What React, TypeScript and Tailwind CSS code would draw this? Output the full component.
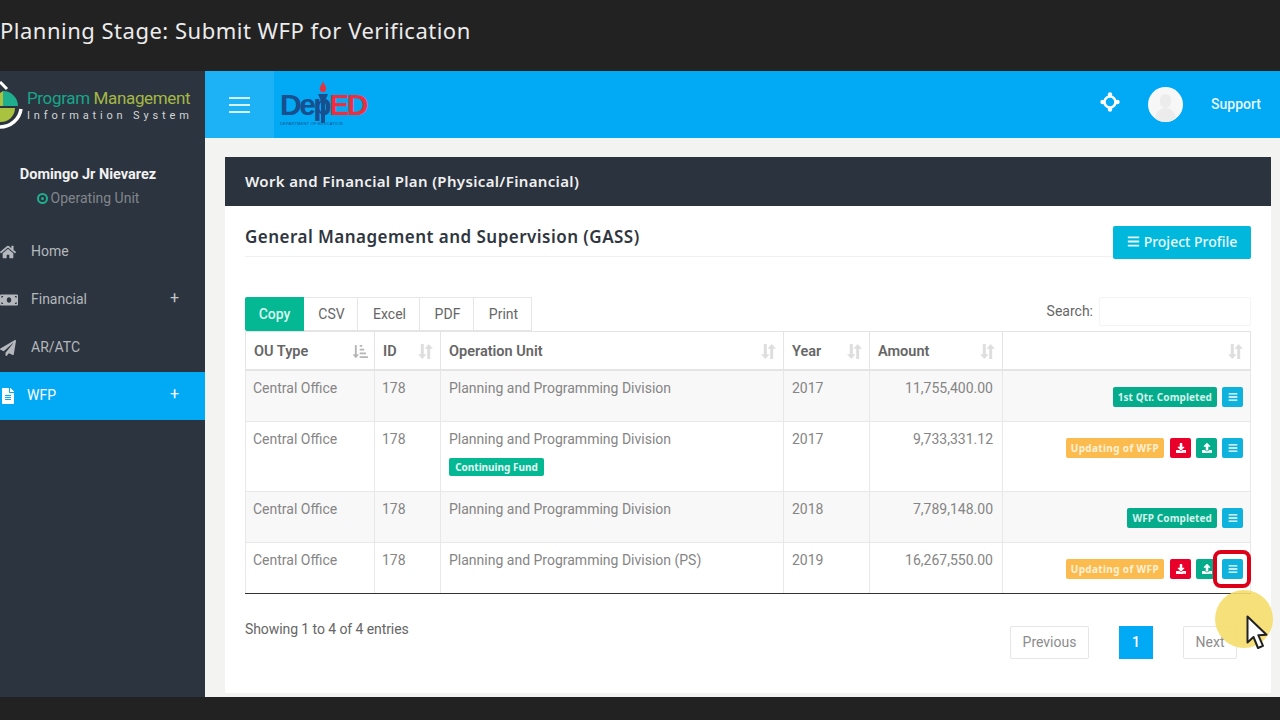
import { FaBars, FaDownload, FaFileAlt, FaHome, FaMoneyBill, FaPaperPlane, FaSortAmountDownAlt, FaUpload } from 'react-icons/fa';

const rows = [
  { unit: 'Planning and Programming Division', year: '2017', amount: '11,755,400.00', h: 'h-[51px]', status: '1st Qtr. Completed', done: true },
  { unit: 'Planning and Programming Division', year: '2017', amount: '9,733,331.12', h: 'h-[70px]', status: 'Updating of WFP', done: false, fund: true },
  { unit: 'Planning and Programming Division', year: '2018', amount: '7,789,148.00', h: 'h-[51px]', status: 'WFP Completed', done: true },
  { unit: 'Planning and Programming Division (PS)', year: '2019', amount: '16,267,550.00', h: 'h-[50px]', status: 'Updating of WFP', done: false },
];

const columns = [
  { label: 'OU Type', w: 'w-[129px]', active: true },
  { label: 'ID', w: 'w-[66px]' },
  { label: 'Operation Unit', w: 'w-[343px]' },
  { label: 'Year', w: 'w-[86px]' },
  { label: 'Amount', w: 'w-[133px]' },
  { label: '', w: 'flex-1' },
];

function SortIcon() {
  return (
    <svg width="17" height="17" viewBox="0 0 16 16" fill="#dedede" className="ml-auto">
      <path d="M3.6 1h2.8v9.5H9L5 15 1 10.5h2.6z" />
      <path d="M9.6 15h2.8V5.5H15L11 1 7 5.5h2.6z" />
    </svg>
  );
}

function ActionButton({ color, children }: { color: string; children: React.ReactNode }) {
  return <span className={`flex h-5 w-[21px] items-center justify-center rounded-[2px] text-[10px] text-white ${color}`}>{children}</span>;
}

function SideItem({ icon, label, plus, active }: { icon: React.ReactNode; label: string; plus?: boolean; active?: boolean }) {
  return (
    <div className={`flex h-12 items-center pr-[26px] text-[14px] ${active ? 'bg-[#02a9f4] text-white' : 'text-[#b4b8bc]'}`}>
      <span className="flex w-[31px] shrink-0 text-[16px]">{icon}</span>
      <span className={active ? '-ml-1 flex-1' : 'flex-1'}>{label}</span>
      {plus && <span className={`mb-1 text-[16px] ${active ? 'text-white' : 'text-[#c4c7ca]'}`}>+</span>}
    </div>
  );
}

export default function App() {
  return (
    <div className="relative flex h-[720px] w-[1280px] flex-col overflow-hidden bg-[#222222] font-['Roboto',sans-serif]">
      <div className="flex h-[71px] items-center pb-[10px] font-['Noto_Sans',sans-serif] text-[22px] tracking-[0.5px] text-[#ececec]">
        <span>Planning Stage: Submit WFP for Verification</span>
      </div>

      <div className="flex h-[626px]">
        {/* Sidebar */}
        <aside className="w-[205px] shrink-0 bg-[#2c343f]">
          <div className="flex h-[67px] items-center">
            <svg width="24" height="50" viewBox="0 0 24 50" className="mt-[2px] shrink-0">
              <path d="M3 10a15 15 0 0 1 15 15H3z" fill="#1fae8e" />
              <path d="M0 12l3-2v15H0z" fill="#a9c23f" />
              <path d="M0 27h15a14 14 0 0 1-15 14z" fill="#a9c23f" />
              <path d="M21 28a21 21 0 0 1-21 18" fill="none" stroke="#fff" strokeWidth="3.5" />
              <path d="M0 1l7 7" stroke="#fff" strokeWidth="3" />
            </svg>
            <div className="ml-[3px] leading-none">
              <div className="mt-[2px] text-[17px] tracking-[-0.35px]">
                <span className="text-[#17a689]">Program </span>
                <span className="text-[#a4b845]">Management</span>
              </div>
              <div className="mt-[3px] text-[11px] tracking-[3.85px] text-[#d2d4d6]">Information System</div>
            </div>
          </div>
          <div className="mt-[26px] pr-[29px] text-center">
            <div className="whitespace-nowrap text-[14.5px] font-bold text-[#f1f1f1]">Domingo Jr Nievarez</div>
            <div className="mt-[2px] flex items-center justify-center gap-[3px] text-[14px] text-[#81868c]">
              <span className="flex h-[11px] w-[11px] items-center justify-center rounded-full border-2 border-[#1fae8e]">
                <span className="h-[3px] w-[3px] rounded-full bg-[#1fae8e]" />
              </span>
              Operating Unit
            </div>
          </div>
          <nav className="mt-[19px]">
            <SideItem icon={<FaHome />} label="Home" />
            <SideItem icon={<FaMoneyBill className="text-[18px]" />} label="Financial" plus />
            <SideItem icon={<FaPaperPlane />} label="AR/ATC" />
            <SideItem icon={<FaFileAlt className="text-white" />} label="WFP" plus active />
          </nav>
        </aside>

        <div className="flex flex-1 flex-col bg-[#f3f3f1]">
          {/* Top bar */}
          <header className="flex h-[67px] shrink-0 items-center bg-[#02a9f4] pr-[19px]">
            <div className="flex h-full w-[69px] items-center justify-center bg-[#1db1f5]">
              <span className="flex w-[21px] flex-col gap-[5px]">
                <span className="h-[2px] bg-[#d8f2fd]" />
                <span className="h-[2px] bg-[#d8f2fd]" />
                <span className="h-[2px] bg-[#d8f2fd]" />
              </span>
            </div>
            <div className="relative ml-[6px] flex h-[50px] w-[90px] items-center font-['Liberation_Sans',sans-serif] text-[30px] font-bold leading-none tracking-[-2.5px]">
              <span className="text-[#174f8f]">Dep</span>
              <span className="text-[#ee2e3c]">ED</span>
              <svg width="12" height="44" viewBox="0 0 12 44" className="absolute left-[37px] top-0">
                <path d="M6 1c1 4 4 5 3 9-1 3-5 3-6 0C2 7 5 5 6 1z" fill="#e5343f" />
                <path d="M1 14h10l-3 7v22H4V21z" fill="#174f8f" />
              </svg>
              <span className="absolute left-0 top-[42px] whitespace-nowrap text-[4px] font-normal leading-none tracking-[0.2px] text-[#174f8f]">DEPARTMENT OF EDUCATION</span>
            </div>
            <div className="flex-1" />
            <svg width="20" height="20" viewBox="0 0 20 20" className="mb-[5px] mr-[28px]">
              <circle cx="10" cy="10" r="5.5" fill="none" stroke="#fff" strokeWidth="2.6" />
              <circle cx="10" cy="2.5" r="2.2" fill="#fff" />
              <circle cx="10" cy="17.5" r="2.2" fill="#fff" />
              <circle cx="2.5" cy="10" r="2.2" fill="#fff" />
              <circle cx="17.5" cy="10" r="2.2" fill="#fff" />
            </svg>
            <div className="relative mr-[28px] h-[35px] w-[35px] overflow-hidden rounded-full bg-[#f7f7f7]">
              <span className="absolute left-[12px] top-[7px] h-[14px] w-[11px] rounded-full bg-[#ececec]" />
              <span className="absolute left-[7px] top-[21px] h-[16px] w-[21px] rounded-t-full bg-[#ececec]" />
            </div>
            <span className="text-[14px] font-medium text-[#e6f6fe]">Support</span>
          </header>

          {/* Card */}
          <main className="ml-5 mr-[9px] mt-[19px] h-[536px] bg-white">
            <div className="flex h-[49px] items-center bg-[#2b333e] px-5 font-['Noto_Sans',sans-serif] text-[15px] font-semibold tracking-[0.35px] text-[#f0f0f0]">
              Work and Financial Plan (Physical/Financial)
            </div>
            <div className="px-5">
              <div className="flex h-[51px] items-start justify-between border-b border-[#f0f0f0] pt-[19px]">
                <h2 className="font-['Noto_Sans',sans-serif] text-[17px] font-semibold leading-[24px] tracking-[0.47px] text-[#2f3640]">
                  General Management and Supervision (GASS)
                </h2>
                <button className="mt-px flex h-[33px] w-[138px] items-center justify-center gap-1 rounded-[2px] bg-[#00b8dc] pb-[2px] font-['Noto_Sans',sans-serif] text-[14px] font-medium text-[#e9fafd]">
                  <FaBars className="text-[13px]" /> Project Profile
                </button>
              </div>

              <div className="mt-10 flex h-[34px] items-start justify-between">
                <div className="flex h-[34px] text-[14px] text-[#666]">
                  <span className="flex w-[59px] items-center justify-center rounded-l-[2px] bg-[#04b894] font-medium text-[#d8f7ef]">Copy</span>
                  {[['CSV', 'w-[54px]'], ['Excel', 'w-[62px]'], ['PDF', 'w-[54px]'], ['Print', 'w-[58px]']].map(([t, w]) => (
                    <span key={t} className={`flex items-center justify-center border border-l-0 border-[#e6e6e6] pl-[2px] ${w}`}>{t}</span>
                  ))}
                </div>
                <div className="flex items-center gap-[6px] text-[14px] text-[#666]">
                  Search:
                  <span className="h-[29px] w-[152px] rounded-[2px] border border-[#f4f4f4]" />
                </div>
              </div>

              {/* Table */}
              <div className="border-b border-[#333]">
                <div className="flex h-[40px] border-y border-b-2 border-l border-[#e4e4e4]">
                  {columns.map((c) => (
                    <div key={c.label} className={`flex items-center justify-between border-r border-[#e4e4e4] pl-2 pr-[6px] pt-[2px] text-[14.5px] font-semibold text-[#666] ${c.w}`}>
                      {c.label}
                      {c.active ? <FaSortAmountDownAlt className="text-[15px] text-[#b5b5b5]" /> : <SortIcon />}
                    </div>
                  ))}
                </div>
                {rows.map((r, i) => (
                  <div key={i} className={`flex border-b border-l border-[#e8e8e8] text-[14px] text-[#858585] last:border-b-0 ${r.h} ${i % 2 === 0 ? 'bg-[#f8f8f8]' : 'bg-white'}`}>
                    <div className="w-[129px] border-r border-[#e8e8e8] pl-[7px] pt-2 leading-[18px]">Central Office</div>
                    <div className="w-[66px] border-r border-[#e8e8e8] pl-[7px] pt-2 leading-[18px]">178</div>
                    <div className="w-[343px] border-r border-[#e8e8e8] pl-2 pt-2 leading-[18px]">
                      {r.unit}
                      {r.fund && <span className="mt-[10px] flex h-[18px] w-[95px] items-center justify-center rounded-[2px] bg-[#04b894] font-['Noto_Sans',sans-serif] text-[10px] font-bold text-[#e4f9f4]">Continuing Fund</span>}
                    </div>
                    <div className="w-[86px] border-r border-[#e8e8e8] pl-2 pt-2 leading-[18px]">{r.year}</div>
                    <div className="w-[133px] border-r border-[#e8e8e8] pr-[9px] pt-2 text-right leading-[18px]">{r.amount}</div>
                    <div className="flex flex-1 items-start justify-end gap-[5px] border-r border-[#e8e8e8] pr-[7px] pt-4 font-['Noto_Sans',sans-serif]">
                      <span className={`flex h-5 items-center rounded-[2px] px-[5px] text-[10px] font-bold ${r.done ? 'bg-[#04ac8c] tracking-[0.1px] text-[#d5f3ec]' : 'mr-px bg-[#fcbb4e] tracking-[0.35px] text-[#fff1d6]'}`}>{r.status}</span>
                      {!r.done && <ActionButton color="bg-[#e8002a]"><FaDownload /></ActionButton>}
                      {!r.done && <ActionButton color="bg-[#04ac8c]"><FaUpload /></ActionButton>}
                      <ActionButton color="bg-[#0fb2dc]"><FaBars /></ActionButton>
                    </div>
                  </div>
                ))}
              </div>

              <div className="flex items-start justify-between">
                <span className="mt-[26px] text-[14px] leading-[18px] tracking-[-0.08px] text-[#666]">Showing 1 to 4 of 4 entries</span>
                <div className="mr-[14px] mt-8 flex h-[33px] items-center text-[14px] text-[#8c8c8c]">
                  <span className="flex h-[33px] w-[79px] items-center justify-center rounded-[2px] border border-[#e6e6e6]">Previous</span>
                  <span className="ml-[30px] flex h-[33px] w-[34px] items-center justify-center bg-[#02a9f4] font-medium text-white">1</span>
                  <span className="ml-[30px] flex h-[33px] w-[54px] items-center justify-center rounded-[2px] border border-[#e6e6e6]">Next</span>
                </div>
              </div>
            </div>
          </main>
        </div>
      </div>

      {/* Recording overlays */}
      <div className="absolute left-[1213px] top-[550px] h-[38px] w-[38px] rounded-[8px] border-[4px] border-[#dd0019]" />
      <div className="absolute left-[1215px] top-[590px] h-[58px] w-[58px] rounded-full bg-[#f4dd6a]/90" />
      <svg width="24" height="36" viewBox="0 0 24 36" className="absolute left-[1246px] top-[615px]">
        <path d="M1.5 1.5v26l6-5.5 4.5 11 5-2.2-4.7-10.6 8.2-.4z" fill="#fff" stroke="#222" strokeWidth="2" strokeLinejoin="round" />
      </svg>
    </div>
  );
}
